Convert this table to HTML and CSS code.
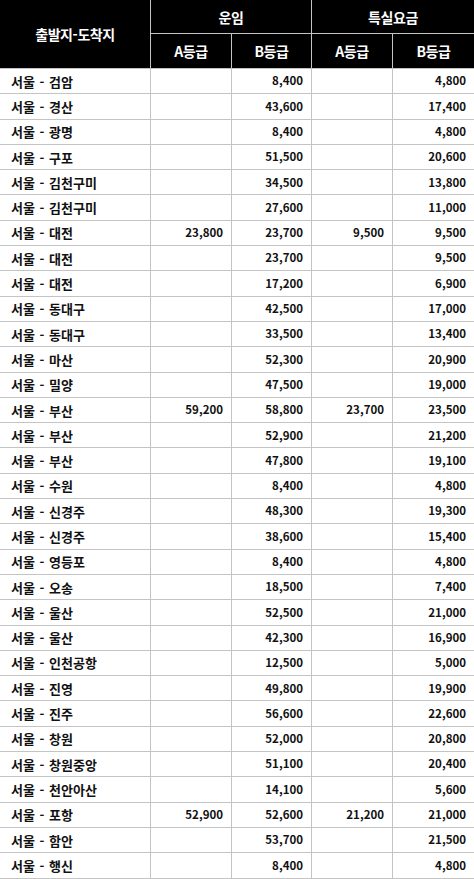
FILE: index.html
```html
<!DOCTYPE html>
<html lang="ko">
<head>
<meta charset="utf-8">
<title>운임표</title>
<link rel="stylesheet" href="styles.css">
</head>
<body>
<div class="fare-table">
  <div class="hcell route-head">출발지-도착지</div>
  <div class="hcell group-head">운임</div>
  <div class="hcell group-head">특실요금</div>
  <div class="hcell">A등급</div>
  <div class="hcell">B등급</div>
  <div class="hcell">A등급</div>
  <div class="hcell">B등급</div>

  <div class="cell name">서울 - 검암</div><div class="cell num"></div><div class="cell num">8,400</div><div class="cell num"></div><div class="cell num">4,800</div>
  <div class="cell name">서울 - 경산</div><div class="cell num"></div><div class="cell num">43,600</div><div class="cell num"></div><div class="cell num">17,400</div>
  <div class="cell name">서울 - 광명</div><div class="cell num"></div><div class="cell num">8,400</div><div class="cell num"></div><div class="cell num">4,800</div>
  <div class="cell name">서울 - 구포</div><div class="cell num"></div><div class="cell num">51,500</div><div class="cell num"></div><div class="cell num">20,600</div>
  <div class="cell name">서울 - 김천구미</div><div class="cell num"></div><div class="cell num">34,500</div><div class="cell num"></div><div class="cell num">13,800</div>
  <div class="cell name">서울 - 김천구미</div><div class="cell num"></div><div class="cell num">27,600</div><div class="cell num"></div><div class="cell num">11,000</div>
  <div class="cell name">서울 - 대전</div><div class="cell num">23,800</div><div class="cell num">23,700</div><div class="cell num">9,500</div><div class="cell num">9,500</div>
  <div class="cell name">서울 - 대전</div><div class="cell num"></div><div class="cell num">23,700</div><div class="cell num"></div><div class="cell num">9,500</div>
  <div class="cell name">서울 - 대전</div><div class="cell num"></div><div class="cell num">17,200</div><div class="cell num"></div><div class="cell num">6,900</div>
  <div class="cell name">서울 - 동대구</div><div class="cell num"></div><div class="cell num">42,500</div><div class="cell num"></div><div class="cell num">17,000</div>
  <div class="cell name">서울 - 동대구</div><div class="cell num"></div><div class="cell num">33,500</div><div class="cell num"></div><div class="cell num">13,400</div>
  <div class="cell name">서울 - 마산</div><div class="cell num"></div><div class="cell num">52,300</div><div class="cell num"></div><div class="cell num">20,900</div>
  <div class="cell name">서울 - 밀양</div><div class="cell num"></div><div class="cell num">47,500</div><div class="cell num"></div><div class="cell num">19,000</div>
  <div class="cell name">서울 - 부산</div><div class="cell num">59,200</div><div class="cell num">58,800</div><div class="cell num">23,700</div><div class="cell num">23,500</div>
  <div class="cell name">서울 - 부산</div><div class="cell num"></div><div class="cell num">52,900</div><div class="cell num"></div><div class="cell num">21,200</div>
  <div class="cell name">서울 - 부산</div><div class="cell num"></div><div class="cell num">47,800</div><div class="cell num"></div><div class="cell num">19,100</div>
  <div class="cell name">서울 - 수원</div><div class="cell num"></div><div class="cell num">8,400</div><div class="cell num"></div><div class="cell num">4,800</div>
  <div class="cell name">서울 - 신경주</div><div class="cell num"></div><div class="cell num">48,300</div><div class="cell num"></div><div class="cell num">19,300</div>
  <div class="cell name">서울 - 신경주</div><div class="cell num"></div><div class="cell num">38,600</div><div class="cell num"></div><div class="cell num">15,400</div>
  <div class="cell name">서울 - 영등포</div><div class="cell num"></div><div class="cell num">8,400</div><div class="cell num"></div><div class="cell num">4,800</div>
  <div class="cell name">서울 - 오송</div><div class="cell num"></div><div class="cell num">18,500</div><div class="cell num"></div><div class="cell num">7,400</div>
  <div class="cell name">서울 - 울산</div><div class="cell num"></div><div class="cell num">52,500</div><div class="cell num"></div><div class="cell num">21,000</div>
  <div class="cell name">서울 - 울산</div><div class="cell num"></div><div class="cell num">42,300</div><div class="cell num"></div><div class="cell num">16,900</div>
  <div class="cell name">서울 - 인천공항</div><div class="cell num"></div><div class="cell num">12,500</div><div class="cell num"></div><div class="cell num">5,000</div>
  <div class="cell name">서울 - 진영</div><div class="cell num"></div><div class="cell num">49,800</div><div class="cell num"></div><div class="cell num">19,900</div>
  <div class="cell name">서울 - 진주</div><div class="cell num"></div><div class="cell num">56,600</div><div class="cell num"></div><div class="cell num">22,600</div>
  <div class="cell name">서울 - 창원</div><div class="cell num"></div><div class="cell num">52,000</div><div class="cell num"></div><div class="cell num">20,800</div>
  <div class="cell name">서울 - 창원중앙</div><div class="cell num"></div><div class="cell num">51,100</div><div class="cell num"></div><div class="cell num">20,400</div>
  <div class="cell name">서울 - 천안아산</div><div class="cell num"></div><div class="cell num">14,100</div><div class="cell num"></div><div class="cell num">5,600</div>
  <div class="cell name">서울 - 포항</div><div class="cell num">52,900</div><div class="cell num">52,600</div><div class="cell num">21,200</div><div class="cell num">21,000</div>
  <div class="cell name">서울 - 함안</div><div class="cell num"></div><div class="cell num">53,700</div><div class="cell num"></div><div class="cell num">21,500</div>
  <div class="cell name">서울 - 행신</div><div class="cell num"></div><div class="cell num">8,400</div><div class="cell num"></div><div class="cell num">4,800</div>
</div>
</body>
</html>
```
FILE: styles.css
```css
html, body {
  margin: 0;
  padding: 0;
  background: #ffffff;
}

.fare-table {
  display: grid;
  grid-template-columns: 150px 80px 79px 80px 81px;
  grid-template-rows: 33px 34px repeat(32, 24.3px);
  gap: 1px;
  padding-bottom: 1px;
  width: 474px;
  background: #c4c4c4;
  font-family: "Noto Sans CJK KR", "Noto Sans", sans-serif;
}

.hcell {
  background: #000000;
  color: #ffffff;
  font-size: 14px;
  font-weight: 700;
  letter-spacing: -0.4px;
  display: flex;
  align-items: center;
  justify-content: center;
  line-height: 1;
}

.route-head {
  grid-row: 1 / span 2;
}

.group-head {
  grid-column: span 2;
}

.cell {
  background: #ffffff;
  color: #111111;
  font-weight: 700;
  display: flex;
  align-items: center;
  line-height: 1;
}

.name {
  font-size: 13px;
  word-spacing: 1px;
  padding-left: 11px;
}

.num {
  font-size: 11.5px;
  justify-content: flex-end;
  padding-right: 8px;
}
```
